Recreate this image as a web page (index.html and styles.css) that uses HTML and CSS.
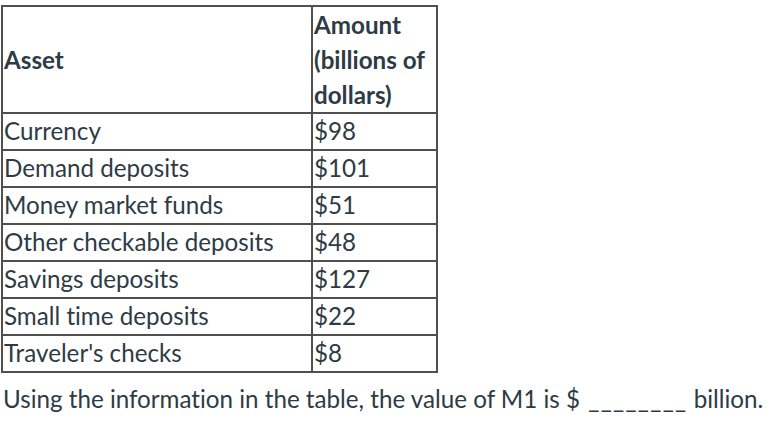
FILE: index.html
```html
<!DOCTYPE html>
<html>
<head>
<meta charset="utf-8">
<link rel="stylesheet" href="styles.css">
</head>
<body>
<table class="data">
  <tr class="head">
    <th class="asset">Asset</th>
    <th class="amount">Amount (billions of dollars)</th>
  </tr>
  <tr><td>Currency</td><td>$98</td></tr>
  <tr><td>Demand deposits</td><td>$101</td></tr>
  <tr><td>Money market funds</td><td>$51</td></tr>
  <tr><td>Other checkable deposits</td><td>$48</td></tr>
  <tr><td>Savings deposits</td><td>$127</td></tr>
  <tr><td>Small time deposits</td><td>$22</td></tr>
  <tr><td>Traveler's checks</td><td>$8</td></tr>
</table>
<p class="question">Using the information in the table, the value of M1 is $ <span class="blank">________</span> billion.</p>
</body>
</html>
```
FILE: styles.css
```css
html, body {
  margin: 0;
  background: #fff;
}
body {
  padding: 5px 0 0 1px;
  font-family: Lato, "Open Sans", sans-serif;
  font-size: 24.2px;
  color: #2d3b45;
  font-variant-ligatures: no-common-ligatures;
}
.data {
  border-collapse: collapse;
  border: 2px solid #505050;
}
.data th, .data td {
  border: 2px solid #505050;
  padding: 0 0 1px 1px;
  line-height: 34px;
  text-align: left;
  vertical-align: middle;
  font-weight: normal;
}
.data th {
  font-weight: bold;
  line-height: 35px;
  padding-bottom: 0;
}
.data .asset {
  width: 307px;
}
.data .amount {
  width: 122px;
}
.question {
  margin: 11px 0 0 2px;
  line-height: 30px;
}
.blank {
  margin-left: 2px;
  letter-spacing: 1.3px;
}
```
